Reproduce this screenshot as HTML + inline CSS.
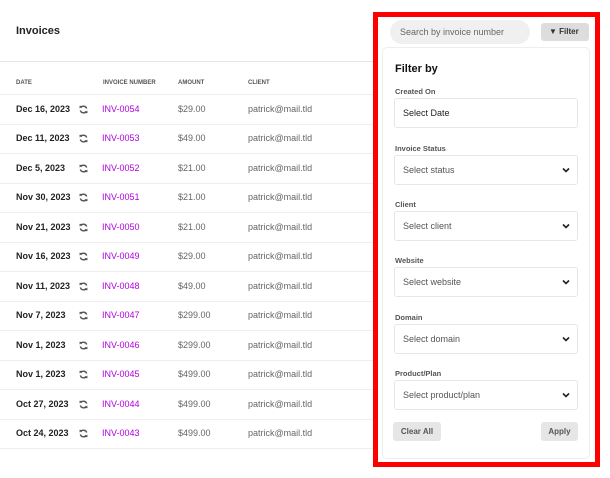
<!DOCTYPE html><html><head><style>
*{box-sizing:border-box;margin:0;padding:0}
body{width:610px;height:478px;background:#fff;font-family:"Liberation Sans",sans-serif;position:relative;overflow:hidden;color:#222}
.a{position:absolute}
.hline{position:absolute;left:0;width:373px;height:1px;background:#eee}
.r{position:absolute;left:0;width:373px;height:29.5px;font-size:9px;line-height:29.5px}
.r span{position:absolute}
.d{left:16px;font-weight:bold;color:#222}
.ic{left:79px;top:10px;width:9px;height:9px}
.n{left:102px;color:#b000e0}
.m{left:178px;color:#666}
.c{left:248px;color:#666}
.lbl{position:absolute;left:395px;font-size:7.5px;font-weight:bold;color:#555}
.box{position:absolute;left:394px;width:184px;height:30px;border:1px solid #e6e6e6;border-radius:3px;font-size:9px;line-height:28px;padding-left:8px;color:#555}
.box svg{position:absolute;right:7px;top:11px}
</style></head><body>
<div class="a" style="left:16px;top:25px;font-size:11px;font-weight:bold">Invoices</div>
<div class="hline" style="top:61px;height:1px;background:#e4e4e4"></div>
<div class="a" style="top:80px;left:16px;font-size:6px;font-weight:bold;color:#555">DATE</div>
<div class="a" style="top:80px;left:103px;font-size:6px;font-weight:bold;color:#555">INVOICE NUMBER</div>
<div class="a" style="top:80px;left:178px;font-size:6px;font-weight:bold;color:#555">AMOUNT</div>
<div class="a" style="top:80px;left:248px;font-size:6px;font-weight:bold;color:#555">CLIENT</div>
<div id="rows"></div>
<script>
var ic='<svg class="ic" style="position:absolute;left:79px;top:10px" width="9" height="9" viewBox="0 0 10 10"><path d="M8.5 4A3.6 3.6 0 0 0 2 3" fill="none" stroke="#555" stroke-width="1.6"/><path d="M1.5 6A3.6 3.6 0 0 0 8 7" fill="none" stroke="#555" stroke-width="1.6"/><path d="M0.5 1L3.5 1L0.8 4Z M9.5 9L6.5 9L9.2 6Z" fill="#555"/></svg>';
var d=[["Dec 16, 2023","0054","29"],["Dec 11, 2023","0053","49"],["Dec 5, 2023","0052","21"],["Nov 30, 2023","0051","21"],["Nov 21, 2023","0050","21"],["Nov 16, 2023","0049","29"],["Nov 11, 2023","0048","49"],["Nov 7, 2023","0047","299"],["Nov 1, 2023","0046","299"],["Nov 1, 2023","0045","499"],["Oct 27, 2023","0044","499"],["Oct 24, 2023","0043","499"]];
var h="";d.forEach(function(x,i){var t=94+i*29.5;h+='<div class="hline" style="top:'+t+'px"></div><div class="r" style="top:'+(t+0.5)+'px"><span class="d">'+x[0]+'</span>'+ic+'<span class="n">INV-'+x[1]+'</span><span class="m">$'+x[2]+'.00</span><span class="c">patrick@mail.tld</span></div>';});
h+='<div class="hline" style="top:448px"></div>';
document.getElementById("rows").innerHTML=h;
var chev='<svg width="8" height="6" viewBox="0 0 8 6"><path d="M1 1.5L4 4.5L7 1.5" fill="none" stroke="#222" stroke-width="1.6"/></svg>';
window.addEventListener('DOMContentLoaded',function(){document.querySelectorAll('.box.s').forEach(function(b){b.insertAdjacentHTML('beforeend',chev)})});
</script>
<div class="a" style="left:373px;top:12px;width:227px;height:455px;border:5px solid #f00;background:#fff"></div>
<div class="a" style="left:390px;top:20px;width:140px;height:24px;border-radius:12px;background:#f0f0f0;font-size:9px;color:#666;line-height:24px;padding-left:10px">Search by invoice number</div>
<div class="a" style="left:541px;top:23px;width:48px;height:18px;border-radius:3px;background:#ddd;font-size:8px;font-weight:bold;color:#333;line-height:18px;padding-left:8px">▼ Filter</div>
<div class="a" style="left:382px;top:47px;width:208px;height:412px;border:1px solid #eee;border-radius:5px"></div>
<div class="a" style="left:395px;top:63px;font-size:11px;font-weight:bold;color:#111">Filter by</div>
<div class="lbl" style="top:87px">Created On</div>
<div class="box" style="top:98px;color:#222">Select Date</div>
<div class="lbl" style="top:144px">Invoice Status</div>
<div class="box s" style="top:155px">Select status</div>
<div class="lbl" style="top:200px">Client</div>
<div class="box s" style="top:211px">Select client</div>
<div class="lbl" style="top:256px">Website</div>
<div class="box s" style="top:267px">Select website</div>
<div class="lbl" style="top:313px">Domain</div>
<div class="box s" style="top:324px">Select domain</div>
<div class="lbl" style="top:369px">Product/Plan</div>
<div class="box s" style="top:380px">Select product/plan</div>
<div class="a" style="left:393px;top:422px;width:48px;height:19px;border-radius:3px;background:#e6e6e6;font-size:8px;font-weight:bold;color:#555;line-height:19px;text-align:center">Clear All</div>
<div class="a" style="left:541px;top:422px;width:37px;height:19px;border-radius:3px;background:#e6e6e6;font-size:8px;font-weight:bold;color:#555;line-height:19px;text-align:center">Apply</div>
</body></html>
